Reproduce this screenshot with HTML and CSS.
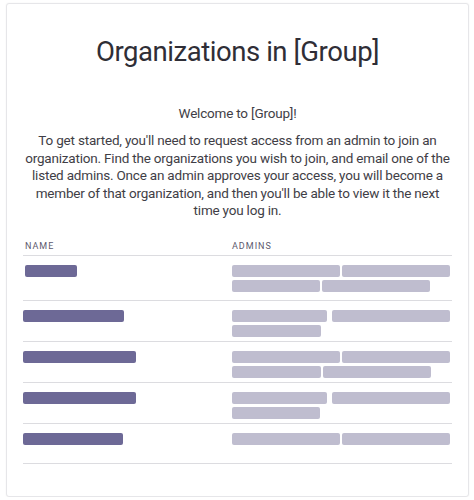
FILE: index.html
```html
<!DOCTYPE html>
<html lang="en">
<head>
<meta charset="utf-8">
<title>Organizations</title>
<link rel="stylesheet" href="styles.css">
</head>
<body>
<main class="card">
  <h1 class="title">Organizations in [Group]</h1>
  <p class="welcome">Welcome to [Group]!</p>
  <p class="intro">To get started, you'll need to request access from an admin to join an<br>organization. Find the organizations you wish to join, and email one of the<br>listed admins. Once an admin approves your access, you will become a<br>member of that organization, and then you'll be able to view it the next<br>time you log in.</p>
  <div class="table">
    <div class="head">
      <span class="col-name">Name</span>
      <span class="col-admins">Admins</span>
    </div>
    <div class="row row-first">
      <div class="col-name"><span class="bar name w52 nudge"></span></div>
      <div class="col-admins"><span class="bar admin w108"></span><span class="bar admin w108"></span><span class="bar admin w88"></span><span class="bar admin w108"></span></div>
    </div>
    <div class="row">
      <div class="col-name"><span class="bar name w101"></span></div>
      <div class="col-admins"><span class="bar admin w95"></span><span class="bar admin w118 gap"></span><span class="bar admin w89"></span></div>
    </div>
    <div class="row">
      <div class="col-name"><span class="bar name w113"></span></div>
      <div class="col-admins"><span class="bar admin w108"></span><span class="bar admin w108"></span><span class="bar admin w89"></span><span class="bar admin w108"></span></div>
    </div>
    <div class="row">
      <div class="col-name"><span class="bar name w113"></span></div>
      <div class="col-admins"><span class="bar admin w95"></span><span class="bar admin w118 gap"></span><span class="bar admin w88"></span></div>
    </div>
    <div class="row row-last">
      <div class="col-name"><span class="bar name w100"></span></div>
      <div class="col-admins"><span class="bar admin w108"></span><span class="bar admin w108"></span></div>
    </div>
  </div>
</main>
</body>
</html>
```
FILE: styles.css
```css
html, body {
  margin: 0;
  padding: 0;
  background: #ffffff;
  overflow: hidden;
}
body {
  font-family: Roboto, "Liberation Sans", Arial, sans-serif;
  color: #3f3e46;
}
.card {
  box-sizing: border-box;
  margin: 3px 5px 0 6px;
  height: 494px;
  border: 1px solid #e6e6e9;
  border-radius: 3px;
  box-shadow: 0 0 2px rgba(0, 0, 0, 0.06);
  padding: 30px 16px 0 16px;
  background: #fff;
}
.title {
  margin: 0;
  font-size: 27.5px;
  letter-spacing: -0.45px;
  line-height: 36px;
  font-weight: 400;
  text-align: center;
  color: #2f2e36;
}
.welcome {
  margin: 34px 0 0 0;
  font-size: 13.5px;
  letter-spacing: -0.2px;
  line-height: 18px;
  text-align: center;
  color: #3f3e46;
}
.intro {
  margin: 10px 0 0 0;
  font-size: 13.5px;
  letter-spacing: -0.2px;
  line-height: 17.5px;
  text-align: center;
  color: #3f3e46;
  white-space: nowrap;
}
.table {
  margin-top: 20px;
}
.head {
  display: flex;
  font-size: 9px;
  line-height: 12px;
  letter-spacing: 1px;
  text-transform: uppercase;
  color: #5d5a6e;
  padding-bottom: 3px;
  border-bottom: 1px solid #dcdce0;
}
.head .col-name {
  padding-left: 2px;
  box-sizing: border-box;
}
.col-name {
  width: 209px;
  flex: none;
}
.col-admins {
  flex: 1;
  display: flex;
  flex-wrap: wrap;
  align-content: flex-start;
  column-gap: 2px;
  row-gap: 3px;
}
.head .col-admins {
  display: block;
}
.row {
  display: flex;
  box-sizing: border-box;
  height: 41px;
  padding-top: 9px;
  border-bottom: 1px solid #dcdce0;
}
.row-first {
  height: 45px;
}
.row-last {
  height: 40px;
}
.bar {
  display: block;
  height: 12px;
  border-radius: 2px;
}
.bar.name {
  background: #6d6996;
}
.bar.admin {
  background: #bfbdcf;
}
.bar.gap {
  margin-left: 3px;
}
.bar.nudge {
  margin-left: 2px;
}
.w52 { width: 52px; }
.w88 { width: 88px; }
.w89 { width: 89px; }
.w95 { width: 95px; }
.w100 { width: 100px; }
.w101 { width: 101px; }
.w108 { width: 108px; }
.w113 { width: 113px; }
.w118 { width: 118px; }
```
